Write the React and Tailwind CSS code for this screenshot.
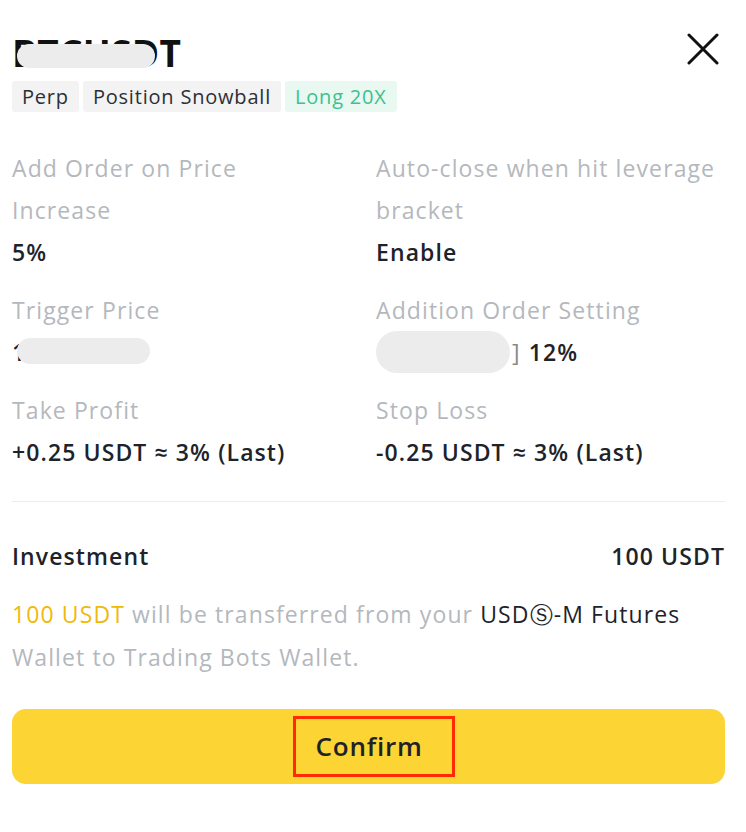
import React from "react";

const font = { fontFamily: "'Open Sans', 'Liberation Sans', sans-serif" };

// blurred-out values are drawn as grey pills
const Blob = ({ className }) => (
  <span className={`inline-block bg-[#ececec] rounded-full ${className}`} />
);

function Field({ label, children }) {
  return (
    <div className="flex flex-col">
      <div className="text-[23px] leading-[42px] text-[#b4b8bd] tracking-[1.1px]">{label}</div>
      <div className="h-[42px] flex items-center text-[23px] text-[#1e2329] font-semibold tracking-[1.1px]">{children}</div>
    </div>
  );
}

export default function App() {
  return (
    <div className="w-[746px] h-[832px] bg-white pl-[12px] pr-[21px] pt-[30px]" style={font}>
      {/* Header */}
      <div className="flex items-start justify-between">
        <div className="relative text-[37px] leading-[46px] font-bold text-[#111] tracking-[0.3px]">
          <span>BTCUSDT</span>
          <span className="absolute left-[5px] top-[14px] w-[138px] h-[24px] bg-[#ececec] rounded-full" />
        </div>
        <button className="mt-[1px] mr-[4px] w-[36px] h-[36px] flex items-center justify-center">
          <svg width="32" height="32" viewBox="0 0 32 32" fill="none" stroke="#111" strokeWidth="3" strokeLinecap="round">
            <path d="M2 2L30 30M30 2L2 30" />
          </svg>
        </button>
      </div>

      {/* Tags */}
      <div className="flex gap-[4px] mt-[5px] tracking-[0.8px]">
        <span className="bg-[#f3f3f3] text-[#2b2f36] text-[20px] leading-[31px] px-[10px] rounded-[3px]">Perp</span>
        <span className="bg-[#f3f3f3] text-[#2b2f36] text-[20px] leading-[31px] px-[10px] rounded-[3px]">Position Snowball</span>
        <span className="bg-[#eaf8f2] text-[#3cc18f] text-[20px] leading-[31px] px-[10px] rounded-[3px]">Long 20X</span>
      </div>

      {/* Details grid */}
      <div className="grid grid-cols-[364px_1fr] gap-y-[16px] mt-[35px]">
        <Field label={<>Add Order on Price<br />Increase</>}>5%</Field>
        <Field label={<>Auto-close when hit leverage<br />bracket</>}>Enable</Field>
        <Field label="Trigger Price">
          <span className="relative inline-block">
            <span>1</span>
            <Blob className="absolute left-[5px] top-[3px] w-[133px] h-[26px]" />
          </span>
        </Field>
        <Field label="Addition Order Setting">
          <Blob className="w-[134px] h-[42px]" />
          <span className="ml-[2px] text-[#888] font-normal">]</span>
          <span className="ml-[8px]">12%</span>
        </Field>
        <Field label="Take Profit">+0.25 USDT ≈ 3% (Last)</Field>
        <Field label="Stop Loss">-0.25 USDT ≈ 3% (Last)</Field>
      </div>

      <div className="h-px bg-[#eaecef] mt-[28px]" />

      {/* Investment */}
      <div className="flex justify-between mt-[33px] text-[23px] leading-[42px] text-[#1e2329] font-semibold tracking-[1.1px]">
        <span>Investment</span>
        <span>100 USDT</span>
      </div>
      <p className="mt-[16px] text-[23px] leading-[43px] text-[#b4b8bd] tracking-[1.1px]">
        <span className="text-[#f0b90b]">100 USDT</span> will be transferred from your{" "}
        <span className="text-[#1e2329]">USDⓈ-M Futures</span>
        <br />
        Wallet to Trading Bots Wallet.
      </p>

      {/* Confirm */}
      <button className="mt-[30px] w-full h-[75px] rounded-[14px] bg-[#fcd535] flex items-center justify-center">
        <span className="ml-[10px] border-[3px] border-[#ff2a00] w-[162px] h-[61px] flex items-center pl-[20px] text-[26px] font-semibold text-[#1e2329] tracking-[0.8px]">
          Confirm
        </span>
      </button>
    </div>
  );
}
